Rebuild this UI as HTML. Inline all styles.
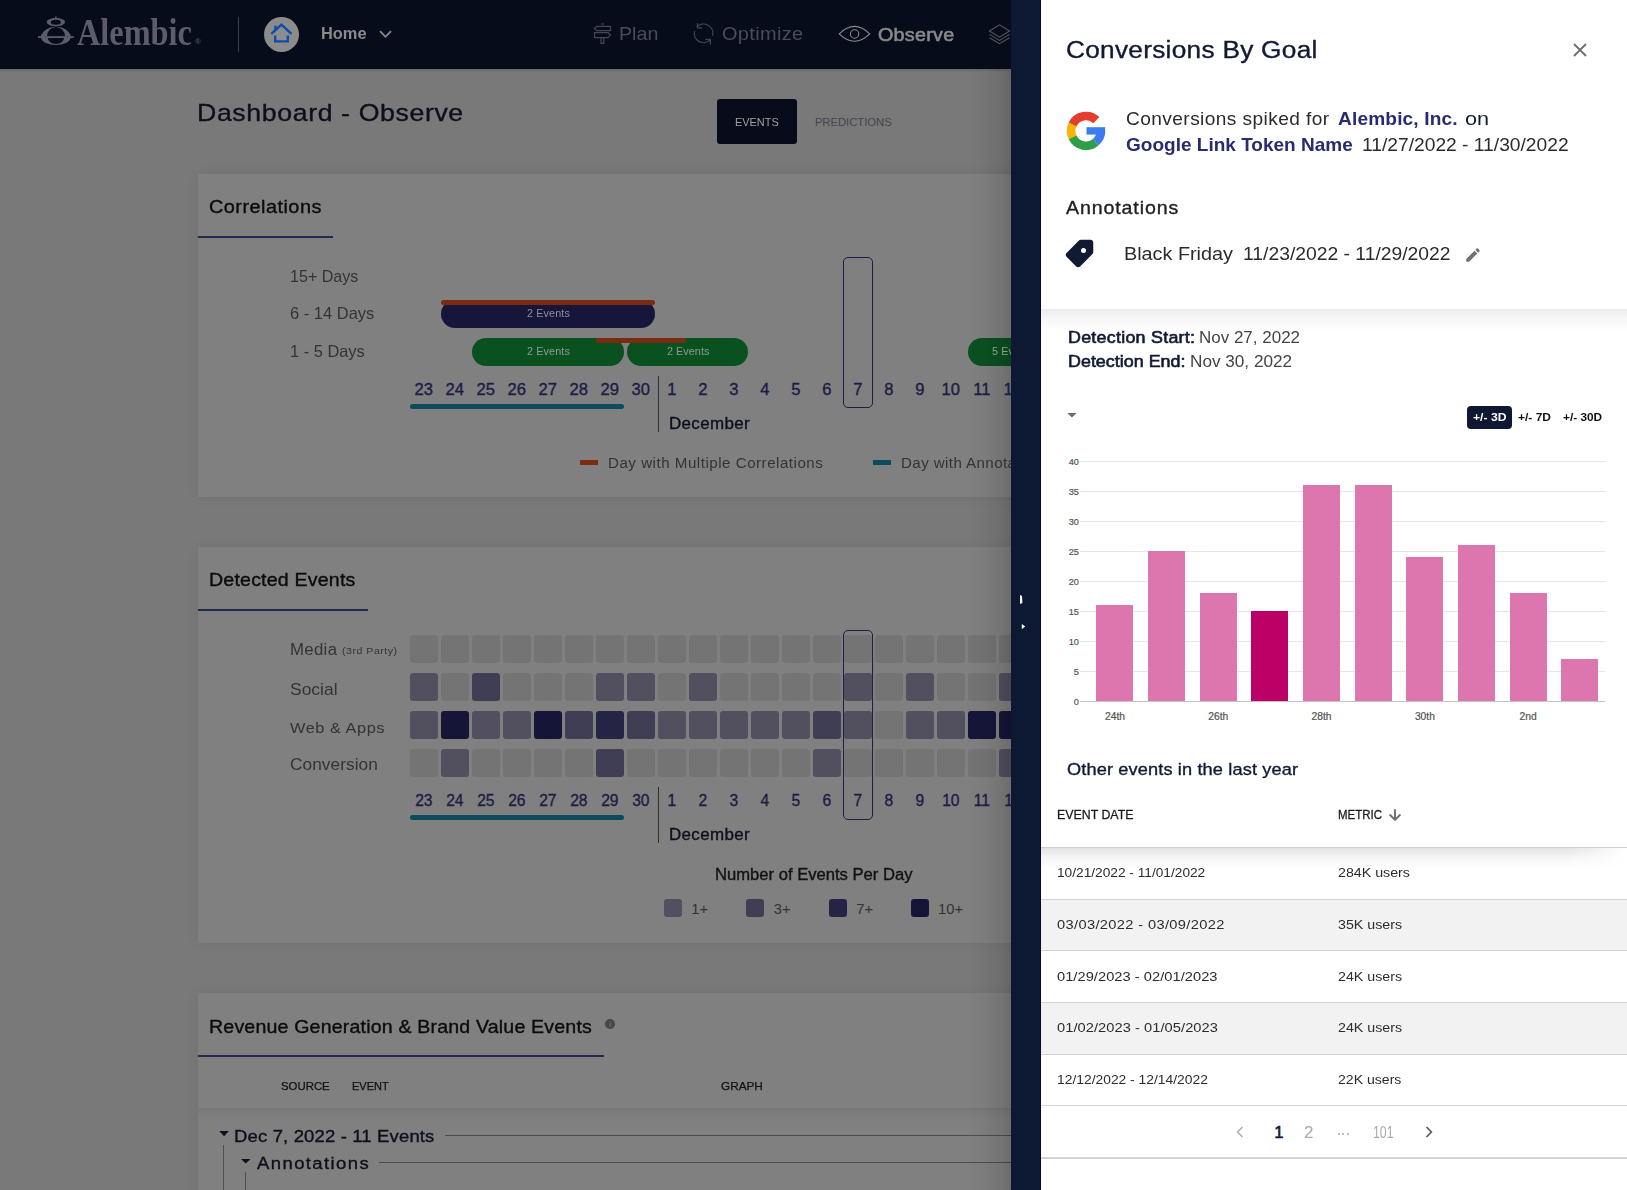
<!DOCTYPE html>
<html><head><meta charset="utf-8"><style>
html,body{margin:0;padding:0}
body{width:1627px;height:1190px;position:relative;overflow:hidden;font-family:"Liberation Sans",sans-serif;background:#7a7a7a}
.t{position:absolute;white-space:nowrap;line-height:1}
</style></head><body><div style="position:absolute;left:0;top:0;width:1011px;height:1190px;overflow:hidden"><div style="position:absolute;left:0.00px;top:0.00px;width:1627.00px;height:1190.00px;background:#797979"></div><div style="position:absolute;left:0.00px;top:0.00px;width:1627.00px;height:69.00px;background:#070c1a"></div><div style="position:absolute;left:0.00px;top:69.00px;width:1627.00px;height:4.00px;background:linear-gradient(to bottom, rgba(0,0,0,0.12), rgba(0,0,0,0))"></div><div style="position:absolute;left:238.00px;top:17.00px;width:1.20px;height:35.00px;background:#3d404c"></div><div style="position:absolute;left:264px;top:17px;width:35px;height:35px;border-radius:50%;background:#8c8c8c"></div><svg style="position:absolute;left:260px;top:15px" width="40" height="40" viewBox="260 15 40 40" fill="none" stroke="#0b4cae" stroke-width="2.4"><path d="M271.3 33.8 L281.4 24.6 L291.5 33.8"/><path d="M275.4 30.2 V25.6"/><path d="M275.2 35.4 V41.4 H287.8 V35.4"/></svg><svg style="position:absolute;left:378px;top:29px" width="15" height="10" viewBox="0 0 15 10"><path d="M2 2.2 L7.5 7.8 L13 2.2" fill="none" stroke="#8a8a8a" stroke-width="1.8"/></svg><svg style="position:absolute;left:0;top:0" width="80" height="50" viewBox="0 0 80 50"><g fill="#5d5c6d" fill-rule="evenodd"><path d="M54.5 18.8 L55.9 15.6 L57.3 18.8 Z"/><path d="M46.60 22.10 A9.25 4.10 0 1 0 65.10 22.10 A9.25 4.10 0 1 0 46.60 22.10 ZM50.75 22.20 A5.10 2.50 0 1 0 60.95 22.20 A5.10 2.50 0 1 0 50.75 22.20 Z"/><path d="M40.6 36.4 C43 31.2 48 26.8 56 26.8 C64 26.8 69 31.2 71.4 36.4 Z M47 36.4 A9 9.3 0 0 1 65 36.4 Z"/><rect x="38" y="36.2" width="35.7" height="1.8"/><path d="M41.2 38 A14.7 7.7 0 0 0 70.5 38 Z M47.8 38 A8.1 6.1 0 0 0 64 38 Z"/></g></svg><span style="position:absolute;left:195px;top:37px;font-size:8px;color:#5d5c6d;font-family:'Liberation Sans',sans-serif">&#174;</span><svg style="position:absolute;left:588px;top:18px" width="30" height="30" viewBox="588 18 30 30" fill="none" stroke="#464851" stroke-width="1.2"><path d="M601.2 24 H604.1"/><path d="M596.9 26.4 H610.5 V30.6 H596.9 L594.3 28.5 Z"/><path d="M594.5 32.7 H608 L610.5 35.1 L608 37.6 H594.5 Z"/><path d="M601 38 V43.4 H603.8 V38"/></svg><svg style="position:absolute;left:688px;top:18px" width="30" height="30" viewBox="688 18 30 30" fill="none" stroke="#42444d" stroke-width="1.3"><path d="M696.69 27.18 A9.30 9.30 0 0 1 712.62 35.65"/><path d="M694.62 30.99 A9.30 9.30 0 0 0 710.06 40.09"/><path d="M697.4 23.3 V27.9 H702"/><path d="M705.2 39.3 H710.4 V44.6"/></svg><svg style="position:absolute;left:834px;top:20px" width="42" height="28" viewBox="834 20 42 28" fill="none" stroke="#8a8a8a" stroke-width="1.1"><path d="M839.2 33.9 Q854.6 19 869.7 33.9 Q854.6 48.6 839.2 33.9 Z"/><circle cx="854.6" cy="34" r="4.2"/></svg><svg style="position:absolute;left:988px;top:24px" width="24" height="22" viewBox="0 0 24 22" fill="none" stroke="#55565e" stroke-width="1.1"><path d="M1.4 7 L11.5 0.8 L21.6 7 L11.5 13.2 Z"/><path d="M1.4 10.4 L11.5 16.4 L21.6 10.4"/><path d="M1.4 13.7 L11.5 19.7 L21.6 13.7"/></svg><div style="position:absolute;left:717px;top:99px;width:80px;height:45px;border-radius:3px;background:#080c1a"></div><div style="position:absolute;left:198.00px;top:174.20px;width:1002.00px;height:322.80px;background:#808080;box-shadow:0 0 12px rgba(0,0,0,0.07)"></div><div style="position:absolute;left:198.00px;top:236.10px;width:135.00px;height:2.00px;background:#1f2b4b"></div><div style="position:absolute;left:198.00px;top:546.70px;width:1002.00px;height:396.00px;background:#808080;box-shadow:0 0 12px rgba(0,0,0,0.07)"></div><div style="position:absolute;left:198.00px;top:609.00px;width:169.80px;height:2.00px;background:#1f2b4b"></div><div style="position:absolute;left:198.00px;top:993.00px;width:1002.00px;height:207.00px;background:#808080;box-shadow:0 0 12px rgba(0,0,0,0.07)"></div><div style="position:absolute;left:198.00px;top:1107.70px;width:1002.00px;height:12.30px;background:linear-gradient(to bottom, rgba(0,0,0,0.07), rgba(0,0,0,0.03) 40%, rgba(0,0,0,0))"></div><div style="position:absolute;left:198.00px;top:1055.00px;width:406.00px;height:2.00px;background:#1f2b4b"></div><div style="position:absolute;left:605px;top:1019px;width:10px;height:10px;border-radius:50%;background:#474747"></div><div style="position:absolute;left:609.30px;top:1021.20px;width:1.40px;height:1.20px;background:#5a5a5a"></div><div style="position:absolute;left:609.30px;top:1023.40px;width:1.40px;height:3.40px;background:#5a5a5a"></div><div style="position:absolute;left:441.0px;top:300.0px;width:214.0px;height:28.0px;border-radius:14px;background:#16163a"></div><div style="position:absolute;left:471.7px;top:338.3px;width:152.5px;height:27.7px;border-radius:14px;background:#0a5120"></div><div style="position:absolute;left:626.6px;top:338.3px;width:121.1px;height:27.7px;border-radius:14px;background:#0a5120"></div><div style="position:absolute;left:968.0px;top:338.3px;width:132.0px;height:27.7px;border-radius:14px;background:#0a5120"></div><div style="position:absolute;left:441px;top:300px;width:214px;height:5px;border-radius:3px;background:#7a2c12"></div><div style="position:absolute;left:596.1px;top:338.3px;width:89.8px;height:4.8px;border-radius:3px;background:#7a2c12"></div><div style="position:absolute;left:410px;top:404.1px;width:214px;height:5px;border-radius:3px;background:#0c4a5c"></div><div style="position:absolute;left:410px;top:815px;width:214px;height:5px;border-radius:3px;background:#0c4a5c"></div><div style="position:absolute;left:658.00px;top:376.00px;width:1.20px;height:56.00px;background:#2e2e2e"></div><div style="position:absolute;left:658.00px;top:787.00px;width:1.20px;height:56.00px;background:#2e2e2e"></div><div style="position:absolute;left:843.3px;top:257.3px;width:29.5px;height:151px;border:1.3px solid #1e1e48;border-radius:5px;box-sizing:border-box"></div><div style="position:absolute;left:843.3px;top:629.9px;width:29.5px;height:189.8px;border:1.3px solid #1e1e48;border-radius:5px;box-sizing:border-box"></div><div style="position:absolute;left:579.60px;top:460.00px;width:18.60px;height:5.00px;background:#7a2c12"></div><div style="position:absolute;left:873.00px;top:460.00px;width:17.80px;height:5.00px;background:#0c4a5c"></div><div style="position:absolute;left:410.1px;top:635.0px;width:27.7px;height:27.8px;border-radius:3px;background:#747474"></div><div style="position:absolute;left:441.1px;top:635.0px;width:27.7px;height:27.8px;border-radius:3px;background:#747474"></div><div style="position:absolute;left:472.1px;top:635.0px;width:27.7px;height:27.8px;border-radius:3px;background:#747474"></div><div style="position:absolute;left:503.1px;top:635.0px;width:27.7px;height:27.8px;border-radius:3px;background:#747474"></div><div style="position:absolute;left:534.1px;top:635.0px;width:27.7px;height:27.8px;border-radius:3px;background:#747474"></div><div style="position:absolute;left:565.1px;top:635.0px;width:27.7px;height:27.8px;border-radius:3px;background:#747474"></div><div style="position:absolute;left:596.1px;top:635.0px;width:27.7px;height:27.8px;border-radius:3px;background:#747474"></div><div style="position:absolute;left:627.1px;top:635.0px;width:27.7px;height:27.8px;border-radius:3px;background:#747474"></div><div style="position:absolute;left:658.1px;top:635.0px;width:27.7px;height:27.8px;border-radius:3px;background:#747474"></div><div style="position:absolute;left:689.1px;top:635.0px;width:27.7px;height:27.8px;border-radius:3px;background:#747474"></div><div style="position:absolute;left:720.1px;top:635.0px;width:27.7px;height:27.8px;border-radius:3px;background:#747474"></div><div style="position:absolute;left:751.1px;top:635.0px;width:27.7px;height:27.8px;border-radius:3px;background:#747474"></div><div style="position:absolute;left:782.1px;top:635.0px;width:27.7px;height:27.8px;border-radius:3px;background:#747474"></div><div style="position:absolute;left:813.1px;top:635.0px;width:27.7px;height:27.8px;border-radius:3px;background:#747474"></div><div style="position:absolute;left:844.1px;top:635.0px;width:27.7px;height:27.8px;border-radius:3px;background:#747474"></div><div style="position:absolute;left:875.1px;top:635.0px;width:27.7px;height:27.8px;border-radius:3px;background:#747474"></div><div style="position:absolute;left:906.1px;top:635.0px;width:27.7px;height:27.8px;border-radius:3px;background:#747474"></div><div style="position:absolute;left:937.1px;top:635.0px;width:27.7px;height:27.8px;border-radius:3px;background:#747474"></div><div style="position:absolute;left:968.1px;top:635.0px;width:27.7px;height:27.8px;border-radius:3px;background:#747474"></div><div style="position:absolute;left:999.1px;top:635.0px;width:27.7px;height:27.8px;border-radius:3px;background:#747474"></div><div style="position:absolute;left:410.1px;top:673.0px;width:27.7px;height:27.8px;border-radius:3px;background:#52505f"></div><div style="position:absolute;left:441.1px;top:673.0px;width:27.7px;height:27.8px;border-radius:3px;background:#747474"></div><div style="position:absolute;left:472.1px;top:673.0px;width:27.7px;height:27.8px;border-radius:3px;background:#403e55"></div><div style="position:absolute;left:503.1px;top:673.0px;width:27.7px;height:27.8px;border-radius:3px;background:#747474"></div><div style="position:absolute;left:534.1px;top:673.0px;width:27.7px;height:27.8px;border-radius:3px;background:#747474"></div><div style="position:absolute;left:565.1px;top:673.0px;width:27.7px;height:27.8px;border-radius:3px;background:#747474"></div><div style="position:absolute;left:596.1px;top:673.0px;width:27.7px;height:27.8px;border-radius:3px;background:#52505f"></div><div style="position:absolute;left:627.1px;top:673.0px;width:27.7px;height:27.8px;border-radius:3px;background:#52505f"></div><div style="position:absolute;left:658.1px;top:673.0px;width:27.7px;height:27.8px;border-radius:3px;background:#747474"></div><div style="position:absolute;left:689.1px;top:673.0px;width:27.7px;height:27.8px;border-radius:3px;background:#52505f"></div><div style="position:absolute;left:720.1px;top:673.0px;width:27.7px;height:27.8px;border-radius:3px;background:#747474"></div><div style="position:absolute;left:751.1px;top:673.0px;width:27.7px;height:27.8px;border-radius:3px;background:#747474"></div><div style="position:absolute;left:782.1px;top:673.0px;width:27.7px;height:27.8px;border-radius:3px;background:#747474"></div><div style="position:absolute;left:813.1px;top:673.0px;width:27.7px;height:27.8px;border-radius:3px;background:#747474"></div><div style="position:absolute;left:844.1px;top:673.0px;width:27.7px;height:27.8px;border-radius:3px;background:#52505f"></div><div style="position:absolute;left:875.1px;top:673.0px;width:27.7px;height:27.8px;border-radius:3px;background:#747474"></div><div style="position:absolute;left:906.1px;top:673.0px;width:27.7px;height:27.8px;border-radius:3px;background:#52505f"></div><div style="position:absolute;left:937.1px;top:673.0px;width:27.7px;height:27.8px;border-radius:3px;background:#747474"></div><div style="position:absolute;left:968.1px;top:673.0px;width:27.7px;height:27.8px;border-radius:3px;background:#747474"></div><div style="position:absolute;left:999.1px;top:673.0px;width:27.7px;height:27.8px;border-radius:3px;background:#52505f"></div><div style="position:absolute;left:410.1px;top:711.1px;width:27.7px;height:27.8px;border-radius:3px;background:#52505f"></div><div style="position:absolute;left:441.1px;top:711.1px;width:27.7px;height:27.8px;border-radius:3px;background:#151538"></div><div style="position:absolute;left:472.1px;top:711.1px;width:27.7px;height:27.8px;border-radius:3px;background:#52505f"></div><div style="position:absolute;left:503.1px;top:711.1px;width:27.7px;height:27.8px;border-radius:3px;background:#52505f"></div><div style="position:absolute;left:534.1px;top:711.1px;width:27.7px;height:27.8px;border-radius:3px;background:#151538"></div><div style="position:absolute;left:565.1px;top:711.1px;width:27.7px;height:27.8px;border-radius:3px;background:#403e55"></div><div style="position:absolute;left:596.1px;top:711.1px;width:27.7px;height:27.8px;border-radius:3px;background:#252444"></div><div style="position:absolute;left:627.1px;top:711.1px;width:27.7px;height:27.8px;border-radius:3px;background:#403e55"></div><div style="position:absolute;left:658.1px;top:711.1px;width:27.7px;height:27.8px;border-radius:3px;background:#52505f"></div><div style="position:absolute;left:689.1px;top:711.1px;width:27.7px;height:27.8px;border-radius:3px;background:#52505f"></div><div style="position:absolute;left:720.1px;top:711.1px;width:27.7px;height:27.8px;border-radius:3px;background:#52505f"></div><div style="position:absolute;left:751.1px;top:711.1px;width:27.7px;height:27.8px;border-radius:3px;background:#52505f"></div><div style="position:absolute;left:782.1px;top:711.1px;width:27.7px;height:27.8px;border-radius:3px;background:#52505f"></div><div style="position:absolute;left:813.1px;top:711.1px;width:27.7px;height:27.8px;border-radius:3px;background:#403e55"></div><div style="position:absolute;left:844.1px;top:711.1px;width:27.7px;height:27.8px;border-radius:3px;background:#52505f"></div><div style="position:absolute;left:875.1px;top:711.1px;width:27.7px;height:27.8px;border-radius:3px;background:#747474"></div><div style="position:absolute;left:906.1px;top:711.1px;width:27.7px;height:27.8px;border-radius:3px;background:#52505f"></div><div style="position:absolute;left:937.1px;top:711.1px;width:27.7px;height:27.8px;border-radius:3px;background:#52505f"></div><div style="position:absolute;left:968.1px;top:711.1px;width:27.7px;height:27.8px;border-radius:3px;background:#151538"></div><div style="position:absolute;left:999.1px;top:711.1px;width:27.7px;height:27.8px;border-radius:3px;background:#151538"></div><div style="position:absolute;left:410.1px;top:749.1px;width:27.7px;height:27.8px;border-radius:3px;background:#747474"></div><div style="position:absolute;left:441.1px;top:749.1px;width:27.7px;height:27.8px;border-radius:3px;background:#52505f"></div><div style="position:absolute;left:472.1px;top:749.1px;width:27.7px;height:27.8px;border-radius:3px;background:#747474"></div><div style="position:absolute;left:503.1px;top:749.1px;width:27.7px;height:27.8px;border-radius:3px;background:#747474"></div><div style="position:absolute;left:534.1px;top:749.1px;width:27.7px;height:27.8px;border-radius:3px;background:#747474"></div><div style="position:absolute;left:565.1px;top:749.1px;width:27.7px;height:27.8px;border-radius:3px;background:#747474"></div><div style="position:absolute;left:596.1px;top:749.1px;width:27.7px;height:27.8px;border-radius:3px;background:#403e55"></div><div style="position:absolute;left:627.1px;top:749.1px;width:27.7px;height:27.8px;border-radius:3px;background:#747474"></div><div style="position:absolute;left:658.1px;top:749.1px;width:27.7px;height:27.8px;border-radius:3px;background:#747474"></div><div style="position:absolute;left:689.1px;top:749.1px;width:27.7px;height:27.8px;border-radius:3px;background:#747474"></div><div style="position:absolute;left:720.1px;top:749.1px;width:27.7px;height:27.8px;border-radius:3px;background:#747474"></div><div style="position:absolute;left:751.1px;top:749.1px;width:27.7px;height:27.8px;border-radius:3px;background:#747474"></div><div style="position:absolute;left:782.1px;top:749.1px;width:27.7px;height:27.8px;border-radius:3px;background:#747474"></div><div style="position:absolute;left:813.1px;top:749.1px;width:27.7px;height:27.8px;border-radius:3px;background:#52505f"></div><div style="position:absolute;left:844.1px;top:749.1px;width:27.7px;height:27.8px;border-radius:3px;background:#747474"></div><div style="position:absolute;left:875.1px;top:749.1px;width:27.7px;height:27.8px;border-radius:3px;background:#747474"></div><div style="position:absolute;left:906.1px;top:749.1px;width:27.7px;height:27.8px;border-radius:3px;background:#747474"></div><div style="position:absolute;left:937.1px;top:749.1px;width:27.7px;height:27.8px;border-radius:3px;background:#747474"></div><div style="position:absolute;left:968.1px;top:749.1px;width:27.7px;height:27.8px;border-radius:3px;background:#747474"></div><div style="position:absolute;left:999.1px;top:749.1px;width:27.7px;height:27.8px;border-radius:3px;background:#52505f"></div><div style="position:absolute;left:663.9px;top:899.1px;width:18px;height:17.7px;border-radius:3px;background:#52505f"></div><div style="position:absolute;left:745.8px;top:899.1px;width:18px;height:17.7px;border-radius:3px;background:#403e55"></div><div style="position:absolute;left:829.2px;top:899.1px;width:18px;height:17.7px;border-radius:3px;background:#252444"></div><div style="position:absolute;left:911.0px;top:899.1px;width:18px;height:17.7px;border-radius:3px;background:#151538"></div><div style="position:absolute;left:445.20px;top:1135.10px;width:654.80px;height:1.00px;background:#4d4d4d"></div><div style="position:absolute;left:379.00px;top:1161.80px;width:721.00px;height:1.00px;background:#4d4d4d"></div><div style="position:absolute;left:223.10px;top:1145.00px;width:1.00px;height:45.00px;background:#505050"></div><div style="position:absolute;left:245.10px;top:1172.30px;width:1.00px;height:17.70px;background:#505050"></div><svg style="position:absolute;left:218px;top:1130px" width="12" height="8"><path d="M1.3 1 H10.9 L6.1 6.2 Z" fill="#0c0f1c"/></svg><svg style="position:absolute;left:240.3px;top:1157.5px" width="12" height="8"><path d="M1 1 H10.5 L5.75 5.6 Z" fill="#0c0f1c"/></svg><div style="position:absolute;left:966px;top:69px;width:45px;height:1121px;background:linear-gradient(to right, rgba(0,0,0,0), rgba(0,0,0,0.03) 40%, rgba(0,0,0,0.09) 75%, rgba(0,0,0,0.16))"></div><span class="t" id="home" style="left:321.06px;top:26.40px;font-size:15.71px;font-weight:700;color:#8a8a8a;letter-spacing:0.000px;font-family:'Liberation Sans', sans-serif;transform:scaleX(1.0444);transform-origin:0 0;">Home</span><span class="t" id="plan" style="left:618.71px;top:25.30px;font-size:18.43px;font-weight:400;color:#4b4c55;letter-spacing:0.000px;font-family:'Liberation Sans', sans-serif;transform:scaleX(1.0677);transform-origin:0 0;">Plan</span><span class="t" id="optimize" style="left:721.70px;top:25.30px;font-size:18.43px;font-weight:400;color:#4b4c55;letter-spacing:0.356px;font-family:'Liberation Sans', sans-serif;transform:scaleX(1.0800);transform-origin:0 0;">Optimize</span><span class="t" id="observe" style="left:877.61px;top:25.52px;font-size:18.29px;font-weight:400;color:#8a8a8a;letter-spacing:0.240px;font-family:'Liberation Sans', sans-serif;transform:scaleX(1.0800);transform-origin:0 0;-webkit-text-stroke:0.60px #8a8a8a;">Observe</span><span class="t" id="logo" style="left:76.54px;top:13.71px;font-size:37.12px;font-weight:700;color:#5d5c6d;letter-spacing:0.000px;font-family:'Liberation Serif', serif;transform:scaleX(0.8710);transform-origin:0 0;">Alembic</span><span class="t" id="title" style="left:196.80px;top:101.08px;font-size:24.71px;font-weight:400;color:#0c0f1c;letter-spacing:0.573px;font-family:'Liberation Sans', sans-serif;transform:scaleX(1.0800);transform-origin:0 0;-webkit-text-stroke:0.35px #0c0f1c;">Dashboard - Observe</span><span class="t" id="evbtn" style="left:735.01px;top:117.02px;font-size:11.31px;font-weight:400;color:#a0a0a0;letter-spacing:0.000px;font-family:'Liberation Sans', sans-serif;transform:scaleX(0.9664);transform-origin:0 0;">EVENTS</span><span class="t" id="predbtn" style="left:814.89px;top:117.02px;font-size:11.31px;font-weight:400;color:#45454f;letter-spacing:-0.038px;font-family:'Liberation Sans', sans-serif;">PREDICTIONS</span><span class="t" id="corr" style="left:209.00px;top:198.10px;font-size:18.43px;font-weight:400;color:#0b0b0b;letter-spacing:0.431px;font-family:'Liberation Sans', sans-serif;transform:scaleX(1.0800);transform-origin:0 0;-webkit-text-stroke:0.35px #0b0b0b;">Correlations</span><span class="t" id="d15" style="left:289.78px;top:267.89px;font-size:16.43px;font-weight:400;color:#333;letter-spacing:0.000px;font-family:'Liberation Sans', sans-serif;transform:scaleX(0.9786);transform-origin:0 0;">15+ Days</span><span class="t" id="d614" style="left:289.76px;top:306.18px;font-size:15.86px;font-weight:400;color:#333;letter-spacing:0.000px;font-family:'Liberation Sans', sans-serif;transform:scaleX(1.0393);transform-origin:0 0;">6 - 14 Days</span><span class="t" id="d15d" style="left:289.76px;top:344.08px;font-size:15.86px;font-weight:400;color:#333;letter-spacing:0.000px;font-family:'Liberation Sans', sans-serif;transform:scaleX(1.0345);transform-origin:0 0;">1 - 5 Days</span><span class="t" id="ev1" style="left:526.51px;top:309.24px;font-size:10.00px;font-weight:400;color:#8e8e92;letter-spacing:0.111px;font-family:'Liberation Sans', sans-serif;transform:scaleX(1.0800);transform-origin:0 0;">2 Events</span><span class="t" id="ev2" style="left:526.51px;top:347.14px;font-size:10.00px;font-weight:400;color:#8e9a92;letter-spacing:0.111px;font-family:'Liberation Sans', sans-serif;transform:scaleX(1.0800);transform-origin:0 0;">2 Events</span><span class="t" id="ev3" style="left:666.51px;top:347.14px;font-size:10.00px;font-weight:400;color:#8e9a92;letter-spacing:0.044px;font-family:'Liberation Sans', sans-serif;transform:scaleX(1.0800);transform-origin:0 0;">2 Events</span><span class="t" id="ev4" style="left:991.51px;top:347.14px;font-size:10.00px;font-weight:400;color:#8e9a92;letter-spacing:0.111px;font-family:'Liberation Sans', sans-serif;transform:scaleX(1.0800);transform-origin:0 0;">5 Events</span><span class="t" id="dec1" style="left:668.84px;top:415.50px;font-size:15.71px;font-weight:400;color:#0c0f1c;letter-spacing:0.317px;font-family:'Liberation Sans', sans-serif;transform:scaleX(1.0800);transform-origin:0 0;-webkit-text-stroke:0.35px #0c0f1c;">December</span><span class="t" id="leg1" style="left:608.02px;top:455.75px;font-size:14.00px;font-weight:400;color:#333;letter-spacing:0.474px;font-family:'Liberation Sans', sans-serif;transform:scaleX(1.0800);transform-origin:0 0;">Day with Multiple Correlations</span><span class="t" id="leg2" style="left:900.82px;top:455.75px;font-size:14.00px;font-weight:400;color:#333;letter-spacing:0.377px;font-family:'Liberation Sans', sans-serif;transform:scaleX(1.0800);transform-origin:0 0;">Day with Annotations</span><span class="t" id="det" style="left:209.32px;top:571.34px;font-size:18.14px;font-weight:400;color:#0b0b0b;letter-spacing:0.180px;font-family:'Liberation Sans', sans-serif;transform:scaleX(1.0800);transform-origin:0 0;-webkit-text-stroke:0.35px #0b0b0b;">Detected Events</span><span class="t" id="lmedia" style="left:290.04px;top:641.52px;font-size:15.57px;font-weight:400;color:#333;letter-spacing:0.285px;font-family:'Liberation Sans', sans-serif;transform:scaleX(1.0800);transform-origin:0 0;">Media</span><span class="t" id="l3rd" style="left:342.42px;top:646.36px;font-size:9.86px;font-weight:400;color:#333;letter-spacing:0.457px;font-family:'Liberation Sans', sans-serif;transform:scaleX(1.0800);transform-origin:0 0;">(3rd Party)</span><span class="t" id="lsocial" style="left:289.52px;top:681.14px;font-size:16.14px;font-weight:400;color:#333;letter-spacing:0.025px;font-family:'Liberation Sans', sans-serif;transform:scaleX(1.0800);transform-origin:0 0;">Social</span><span class="t" id="lweb" style="left:289.56px;top:720.08px;font-size:15.14px;font-weight:400;color:#333;letter-spacing:0.501px;font-family:'Liberation Sans', sans-serif;transform:scaleX(1.0800);transform-origin:0 0;">Web &amp; Apps</span><span class="t" id="lconv" style="left:289.52px;top:757.46px;font-size:16.00px;font-weight:400;color:#333;letter-spacing:0.046px;font-family:'Liberation Sans', sans-serif;transform:scaleX(1.0800);transform-origin:0 0;">Conversion</span><span class="t" id="dec2" style="left:668.84px;top:826.50px;font-size:15.71px;font-weight:400;color:#0c0f1c;letter-spacing:0.317px;font-family:'Liberation Sans', sans-serif;transform:scaleX(1.0800);transform-origin:0 0;-webkit-text-stroke:0.35px #0c0f1c;">December</span><span class="t" id="nepd" style="left:714.95px;top:866.62px;font-size:15.57px;font-weight:400;color:#111;letter-spacing:0.000px;font-family:'Liberation Sans', sans-serif;transform:scaleX(1.0670);transform-origin:0 0;-webkit-text-stroke:0.34px #111;">Number of Events Per Day</span><span class="t" id="lg0" style="left:691.34px;top:902.14px;font-size:14.71px;font-weight:400;color:#333;letter-spacing:0.000px;font-family:'Liberation Sans', sans-serif;">1+</span><span class="t" id="lg1" style="left:773.84px;top:902.14px;font-size:14.71px;font-weight:400;color:#333;letter-spacing:0.000px;font-family:'Liberation Sans', sans-serif;">3+</span><span class="t" id="lg2" style="left:856.24px;top:902.14px;font-size:14.71px;font-weight:400;color:#333;letter-spacing:0.000px;font-family:'Liberation Sans', sans-serif;">7+</span><span class="t" id="lg3" style="left:938.04px;top:902.14px;font-size:14.71px;font-weight:400;color:#333;letter-spacing:0.000px;font-family:'Liberation Sans', sans-serif;">10+</span><span class="t" id="rev" style="left:209.02px;top:1017.64px;font-size:18.14px;font-weight:400;color:#0b0b0b;letter-spacing:0.163px;font-family:'Liberation Sans', sans-serif;transform:scaleX(1.0800);transform-origin:0 0;-webkit-text-stroke:0.35px #0b0b0b;">Revenue Generation &amp; Brand Value Events</span><span class="t" id="hsrc" style="left:280.99px;top:1081.12px;font-size:11.31px;font-weight:400;color:#111;letter-spacing:-0.000px;font-family:'Liberation Sans', sans-serif;transform:scaleX(1.0079);transform-origin:0 0;-webkit-text-stroke:0.25px #111;">SOURCE</span><span class="t" id="hev" style="left:351.60px;top:1081.12px;font-size:11.31px;font-weight:400;color:#111;letter-spacing:0.000px;font-family:'Liberation Sans', sans-serif;transform:scaleX(0.9740);transform-origin:0 0;-webkit-text-stroke:0.25px #111;">EVENT</span><span class="t" id="hgr" style="left:720.67px;top:1081.12px;font-size:11.31px;font-weight:400;color:#111;letter-spacing:0.000px;font-family:'Liberation Sans', sans-serif;transform:scaleX(1.0416);transform-origin:0 0;-webkit-text-stroke:0.25px #111;">GRAPH</span><span class="t" id="dec7" style="left:234.47px;top:1127.89px;font-size:17.14px;font-weight:400;color:#0c0f1c;letter-spacing:0.139px;font-family:'Liberation Sans', sans-serif;transform:scaleX(1.0800);transform-origin:0 0;-webkit-text-stroke:0.35px #0c0f1c;">Dec 7, 2022 - 11 Events</span><span class="t" id="annt" style="left:257.37px;top:1155.09px;font-size:17.14px;font-weight:400;color:#0c0f1c;letter-spacing:1.303px;font-family:'Liberation Sans', sans-serif;transform:scaleX(1.0800);transform-origin:0 0;-webkit-text-stroke:0.35px #0c0f1c;">Annotations</span><span class="t" id="dn0_0" style="left:414.58px;top:381.67px;font-size:16.57px;font-weight:400;color:#1c1c44;letter-spacing:0.000px;font-family:'Liberation Sans', sans-serif;-webkit-text-stroke:0.35px #1c1c44;">23</span><span class="t" id="dn0_1" style="left:445.58px;top:381.67px;font-size:16.57px;font-weight:400;color:#1c1c44;letter-spacing:0.000px;font-family:'Liberation Sans', sans-serif;-webkit-text-stroke:0.35px #1c1c44;">24</span><span class="t" id="dn0_2" style="left:476.58px;top:381.67px;font-size:16.57px;font-weight:400;color:#1c1c44;letter-spacing:0.000px;font-family:'Liberation Sans', sans-serif;-webkit-text-stroke:0.35px #1c1c44;">25</span><span class="t" id="dn0_3" style="left:507.58px;top:381.67px;font-size:16.57px;font-weight:400;color:#1c1c44;letter-spacing:0.000px;font-family:'Liberation Sans', sans-serif;-webkit-text-stroke:0.35px #1c1c44;">26</span><span class="t" id="dn0_4" style="left:538.58px;top:381.67px;font-size:16.57px;font-weight:400;color:#1c1c44;letter-spacing:0.000px;font-family:'Liberation Sans', sans-serif;-webkit-text-stroke:0.35px #1c1c44;">27</span><span class="t" id="dn0_5" style="left:569.58px;top:381.67px;font-size:16.57px;font-weight:400;color:#1c1c44;letter-spacing:0.000px;font-family:'Liberation Sans', sans-serif;-webkit-text-stroke:0.35px #1c1c44;">28</span><span class="t" id="dn0_6" style="left:600.58px;top:381.67px;font-size:16.57px;font-weight:400;color:#1c1c44;letter-spacing:0.000px;font-family:'Liberation Sans', sans-serif;-webkit-text-stroke:0.35px #1c1c44;">29</span><span class="t" id="dn0_7" style="left:631.58px;top:381.67px;font-size:16.57px;font-weight:400;color:#1c1c44;letter-spacing:0.000px;font-family:'Liberation Sans', sans-serif;-webkit-text-stroke:0.35px #1c1c44;">30</span><span class="t" id="dn0_8" style="left:667.19px;top:381.67px;font-size:16.57px;font-weight:400;color:#1c1c44;letter-spacing:0.000px;font-family:'Liberation Sans', sans-serif;-webkit-text-stroke:0.35px #1c1c44;">1</span><span class="t" id="dn0_9" style="left:698.19px;top:381.67px;font-size:16.57px;font-weight:400;color:#1c1c44;letter-spacing:0.000px;font-family:'Liberation Sans', sans-serif;-webkit-text-stroke:0.35px #1c1c44;">2</span><span class="t" id="dn0_10" style="left:729.19px;top:381.67px;font-size:16.57px;font-weight:400;color:#1c1c44;letter-spacing:0.000px;font-family:'Liberation Sans', sans-serif;-webkit-text-stroke:0.35px #1c1c44;">3</span><span class="t" id="dn0_11" style="left:760.19px;top:381.67px;font-size:16.57px;font-weight:400;color:#1c1c44;letter-spacing:0.000px;font-family:'Liberation Sans', sans-serif;-webkit-text-stroke:0.35px #1c1c44;">4</span><span class="t" id="dn0_12" style="left:791.19px;top:381.67px;font-size:16.57px;font-weight:400;color:#1c1c44;letter-spacing:0.000px;font-family:'Liberation Sans', sans-serif;-webkit-text-stroke:0.35px #1c1c44;">5</span><span class="t" id="dn0_13" style="left:822.19px;top:381.67px;font-size:16.57px;font-weight:400;color:#1c1c44;letter-spacing:0.000px;font-family:'Liberation Sans', sans-serif;-webkit-text-stroke:0.35px #1c1c44;">6</span><span class="t" id="dn0_14" style="left:853.19px;top:381.67px;font-size:16.57px;font-weight:400;color:#1c1c44;letter-spacing:0.000px;font-family:'Liberation Sans', sans-serif;-webkit-text-stroke:0.35px #1c1c44;">7</span><span class="t" id="dn0_15" style="left:884.19px;top:381.67px;font-size:16.57px;font-weight:400;color:#1c1c44;letter-spacing:0.000px;font-family:'Liberation Sans', sans-serif;-webkit-text-stroke:0.35px #1c1c44;">8</span><span class="t" id="dn0_16" style="left:915.19px;top:381.67px;font-size:16.57px;font-weight:400;color:#1c1c44;letter-spacing:0.000px;font-family:'Liberation Sans', sans-serif;-webkit-text-stroke:0.35px #1c1c44;">9</span><span class="t" id="dn0_17" style="left:941.58px;top:381.67px;font-size:16.57px;font-weight:400;color:#1c1c44;letter-spacing:0.000px;font-family:'Liberation Sans', sans-serif;-webkit-text-stroke:0.35px #1c1c44;">10</span><span class="t" id="dn0_18" style="left:973.20px;top:381.67px;font-size:16.57px;font-weight:400;color:#1c1c44;letter-spacing:0.000px;font-family:'Liberation Sans', sans-serif;-webkit-text-stroke:0.35px #1c1c44;">11</span><span class="t" id="dn0_19" style="left:1003.58px;top:381.67px;font-size:16.57px;font-weight:400;color:#1c1c44;letter-spacing:0.000px;font-family:'Liberation Sans', sans-serif;-webkit-text-stroke:0.35px #1c1c44;">12</span><span class="t" id="dn1_0" style="left:415.14px;top:793.42px;font-size:15.57px;font-weight:400;color:#1c1c44;letter-spacing:0.000px;font-family:'Liberation Sans', sans-serif;-webkit-text-stroke:0.34px #1c1c44;">23</span><span class="t" id="dn1_1" style="left:446.14px;top:793.42px;font-size:15.57px;font-weight:400;color:#1c1c44;letter-spacing:0.000px;font-family:'Liberation Sans', sans-serif;-webkit-text-stroke:0.34px #1c1c44;">24</span><span class="t" id="dn1_2" style="left:477.14px;top:793.42px;font-size:15.57px;font-weight:400;color:#1c1c44;letter-spacing:0.000px;font-family:'Liberation Sans', sans-serif;-webkit-text-stroke:0.34px #1c1c44;">25</span><span class="t" id="dn1_3" style="left:508.14px;top:793.42px;font-size:15.57px;font-weight:400;color:#1c1c44;letter-spacing:0.000px;font-family:'Liberation Sans', sans-serif;-webkit-text-stroke:0.34px #1c1c44;">26</span><span class="t" id="dn1_4" style="left:539.14px;top:793.42px;font-size:15.57px;font-weight:400;color:#1c1c44;letter-spacing:0.000px;font-family:'Liberation Sans', sans-serif;-webkit-text-stroke:0.34px #1c1c44;">27</span><span class="t" id="dn1_5" style="left:570.14px;top:793.42px;font-size:15.57px;font-weight:400;color:#1c1c44;letter-spacing:0.000px;font-family:'Liberation Sans', sans-serif;-webkit-text-stroke:0.34px #1c1c44;">28</span><span class="t" id="dn1_6" style="left:601.14px;top:793.42px;font-size:15.57px;font-weight:400;color:#1c1c44;letter-spacing:0.000px;font-family:'Liberation Sans', sans-serif;-webkit-text-stroke:0.34px #1c1c44;">29</span><span class="t" id="dn1_7" style="left:632.14px;top:793.42px;font-size:15.57px;font-weight:400;color:#1c1c44;letter-spacing:0.000px;font-family:'Liberation Sans', sans-serif;-webkit-text-stroke:0.34px #1c1c44;">30</span><span class="t" id="dn1_8" style="left:667.47px;top:793.42px;font-size:15.57px;font-weight:400;color:#1c1c44;letter-spacing:0.000px;font-family:'Liberation Sans', sans-serif;-webkit-text-stroke:0.34px #1c1c44;">1</span><span class="t" id="dn1_9" style="left:698.47px;top:793.42px;font-size:15.57px;font-weight:400;color:#1c1c44;letter-spacing:0.000px;font-family:'Liberation Sans', sans-serif;-webkit-text-stroke:0.34px #1c1c44;">2</span><span class="t" id="dn1_10" style="left:729.47px;top:793.42px;font-size:15.57px;font-weight:400;color:#1c1c44;letter-spacing:0.000px;font-family:'Liberation Sans', sans-serif;-webkit-text-stroke:0.34px #1c1c44;">3</span><span class="t" id="dn1_11" style="left:760.47px;top:793.42px;font-size:15.57px;font-weight:400;color:#1c1c44;letter-spacing:0.000px;font-family:'Liberation Sans', sans-serif;-webkit-text-stroke:0.34px #1c1c44;">4</span><span class="t" id="dn1_12" style="left:791.47px;top:793.42px;font-size:15.57px;font-weight:400;color:#1c1c44;letter-spacing:0.000px;font-family:'Liberation Sans', sans-serif;-webkit-text-stroke:0.34px #1c1c44;">5</span><span class="t" id="dn1_13" style="left:822.47px;top:793.42px;font-size:15.57px;font-weight:400;color:#1c1c44;letter-spacing:0.000px;font-family:'Liberation Sans', sans-serif;-webkit-text-stroke:0.34px #1c1c44;">6</span><span class="t" id="dn1_14" style="left:853.47px;top:793.42px;font-size:15.57px;font-weight:400;color:#1c1c44;letter-spacing:0.000px;font-family:'Liberation Sans', sans-serif;-webkit-text-stroke:0.34px #1c1c44;">7</span><span class="t" id="dn1_15" style="left:884.47px;top:793.42px;font-size:15.57px;font-weight:400;color:#1c1c44;letter-spacing:0.000px;font-family:'Liberation Sans', sans-serif;-webkit-text-stroke:0.34px #1c1c44;">8</span><span class="t" id="dn1_16" style="left:915.47px;top:793.42px;font-size:15.57px;font-weight:400;color:#1c1c44;letter-spacing:0.000px;font-family:'Liberation Sans', sans-serif;-webkit-text-stroke:0.34px #1c1c44;">9</span><span class="t" id="dn1_17" style="left:942.14px;top:793.42px;font-size:15.57px;font-weight:400;color:#1c1c44;letter-spacing:0.000px;font-family:'Liberation Sans', sans-serif;-webkit-text-stroke:0.34px #1c1c44;">10</span><span class="t" id="dn1_18" style="left:973.72px;top:793.42px;font-size:15.57px;font-weight:400;color:#1c1c44;letter-spacing:0.000px;font-family:'Liberation Sans', sans-serif;-webkit-text-stroke:0.34px #1c1c44;">11</span><span class="t" id="dn1_19" style="left:1004.14px;top:793.42px;font-size:15.57px;font-weight:400;color:#1c1c44;letter-spacing:0.000px;font-family:'Liberation Sans', sans-serif;-webkit-text-stroke:0.34px #1c1c44;">12</span></div><div style="position:absolute;left:1011.00px;top:0.00px;width:30.00px;height:1190.00px;background:#0d1832"></div><div style="position:absolute;left:1040.00px;top:0.00px;width:1.00px;height:1190.00px;background:#070d20"></div><div style="position:absolute;left:1041.00px;top:0.00px;width:586.00px;height:1190.00px;background:#ffffff"></div><svg style="position:absolute;left:1017px;top:592px" width="10" height="40"><path d="M3 3 L5 4 L5.4 11 L3 12 Z" fill="#fff"/><path d="M4.8 31.9 L8.2 34.6 L4.8 37.3 Z" fill="#fff"/></svg><div style="position:absolute;left:1041px;top:309.4px;width:586px;height:22px;background:linear-gradient(to bottom, rgba(0,0,0,0.075), rgba(0,0,0,0.03) 45%, rgba(0,0,0,0))"></div><svg style="position:absolute;left:1572px;top:42px" width="16" height="16" viewBox="0 0 16 16"><path d="M2 2 L14 14 M14 2 L2 14" stroke="#707070" stroke-width="1.9"/></svg><svg style="position:absolute;left:1062px;top:106px" width="48" height="49" viewBox="1062 106 48 49"><path d="M1096.35 120.18 A14.90 14.90 0 0 0 1072.50 124.60" fill="none" stroke="#e63c2e" stroke-width="8.60"/><path d="M1072.61 124.37 A14.90 14.90 0 0 0 1072.72 137.66" fill="none" stroke="#f9b40a" stroke-width="8.60"/><path d="M1072.61 137.43 A14.90 14.90 0 0 0 1095.58 142.31" fill="none" stroke="#2f9e48" stroke-width="8.60"/><path d="M1095.58 142.31 A14.90 14.90 0 0 0 1100.90 130.64" fill="none" stroke="#3b7ded" stroke-width="8.60"/><rect x="1086.5" y="127.2" width="18.6" height="7.4" fill="#3b7ded"/></svg><svg style="position:absolute;left:1063px;top:237px" width="33" height="33" viewBox="0 0 24 24"><g transform="rotate(90 12 12)"><path fill="#101a33" d="M21.41 11.58l-9-9C12.05 2.22 11.55 2 11 2H4c-1.1 0-2 .9-2 2v7c0 .55.22 1.05.59 1.42l9 9c.36.36.86.58 1.41.58.55 0 1.05-.22 1.41-.59l7-7c.37-.36.59-.86.59-1.41 0-.55-.23-1.06-.59-1.42z"/></g></svg><div style="position:absolute;left:1080.9px;top:247.7px;width:5.2px;height:5.2px;border-radius:50%;background:#fff"></div><svg style="position:absolute;left:1464px;top:245.5px" width="18" height="18" viewBox="0 0 24 24"><path fill="#707070" d="M3 17.25V21h3.75L17.81 9.94l-3.75-3.75L3 17.25zM20.71 7.04c.39-.39.39-1.02 0-1.41l-2.34-2.34c-.39-.39-1.02-.39-1.41 0l-1.83 1.83 3.75 3.75 1.83-1.83z"/></svg><svg style="position:absolute;left:1066px;top:412px" width="12" height="7"><path d="M1.4 1 H10.5 L5.95 5.6 Z" fill="#6a6a6a"/></svg><div style="position:absolute;left:1467px;top:406px;width:45px;height:23px;border-radius:4px;background:#0f1833"></div><div style="position:absolute;left:1079.50px;top:670.60px;width:525.50px;height:1.20px;background:#e6e6e6"></div><div style="position:absolute;left:1079.50px;top:640.60px;width:525.50px;height:1.20px;background:#e6e6e6"></div><div style="position:absolute;left:1079.50px;top:610.60px;width:525.50px;height:1.20px;background:#e6e6e6"></div><div style="position:absolute;left:1079.50px;top:580.60px;width:525.50px;height:1.20px;background:#e6e6e6"></div><div style="position:absolute;left:1079.50px;top:550.60px;width:525.50px;height:1.20px;background:#e6e6e6"></div><div style="position:absolute;left:1079.50px;top:520.60px;width:525.50px;height:1.20px;background:#e6e6e6"></div><div style="position:absolute;left:1079.50px;top:490.60px;width:525.50px;height:1.20px;background:#e6e6e6"></div><div style="position:absolute;left:1079.50px;top:460.60px;width:525.50px;height:1.20px;background:#e6e6e6"></div><div style="position:absolute;left:1079.50px;top:700.50px;width:525.50px;height:1.50px;background:#c4c4c4"></div><div style="position:absolute;left:1096.40px;top:605.20px;width:37.10px;height:95.80px;background:#dd76ae"></div><div style="position:absolute;left:1148.05px;top:551.20px;width:37.10px;height:149.80px;background:#dd76ae"></div><div style="position:absolute;left:1199.70px;top:593.20px;width:37.10px;height:107.80px;background:#dd76ae"></div><div style="position:absolute;left:1251.35px;top:611.20px;width:37.10px;height:89.80px;background:#bb0066"></div><div style="position:absolute;left:1303.00px;top:485.20px;width:37.10px;height:215.80px;background:#dd76ae"></div><div style="position:absolute;left:1354.65px;top:485.20px;width:37.10px;height:215.80px;background:#dd76ae"></div><div style="position:absolute;left:1406.30px;top:557.20px;width:37.10px;height:143.80px;background:#dd76ae"></div><div style="position:absolute;left:1457.95px;top:545.20px;width:37.10px;height:155.80px;background:#dd76ae"></div><div style="position:absolute;left:1509.60px;top:593.20px;width:37.10px;height:107.80px;background:#dd76ae"></div><div style="position:absolute;left:1561.25px;top:659.20px;width:37.10px;height:41.80px;background:#dd76ae"></div><div style="position:absolute;left:1041.00px;top:846.90px;width:586.00px;height:1.20px;background:#d0d0d0"></div><div style="position:absolute;left:1041px;top:848.1px;width:586px;height:21px;background:linear-gradient(to bottom, rgba(0,0,0,0.11), rgba(0,0,0,0.04) 45%, rgba(0,0,0,0));-webkit-mask-image:linear-gradient(to right, #000 90%, rgba(0,0,0,0))"></div><div style="position:absolute;left:1041.00px;top:899.20px;width:586.00px;height:51.20px;background:#f2f2f2"></div><div style="position:absolute;left:1041.00px;top:1002.40px;width:586.00px;height:52.00px;background:#f2f2f2"></div><div style="position:absolute;left:1041.00px;top:898.60px;width:586.00px;height:1.20px;background:#d3d3d3"></div><div style="position:absolute;left:1041.00px;top:949.80px;width:586.00px;height:1.20px;background:#d3d3d3"></div><div style="position:absolute;left:1041.00px;top:1001.80px;width:586.00px;height:1.20px;background:#d3d3d3"></div><div style="position:absolute;left:1041.00px;top:1053.80px;width:586.00px;height:1.20px;background:#d3d3d3"></div><div style="position:absolute;left:1041.00px;top:1104.80px;width:586.00px;height:1.20px;background:#d3d3d3"></div><div style="position:absolute;left:1041.00px;top:1157.40px;width:586.00px;height:1.20px;background:#d3d3d3"></div><svg style="position:absolute;left:1380px;top:800px" width="30" height="30" viewBox="1380 800 30 30" fill="none" stroke="#6e6e6e" stroke-width="1.9"><path d="M1395 809.2 V819.6"/><path d="M1389.6 814.5 L1395 819.9 L1400.4 814.5"/></svg><svg style="position:absolute;left:1234px;top:1125px" width="12" height="14"><path d="M8.5 2 L3.6 7 L8.5 12" fill="none" stroke="#b0b0b0" stroke-width="1.6"/></svg><svg style="position:absolute;left:1423px;top:1125px" width="12" height="14"><path d="M3.5 2 L8.4 7 L3.5 12" fill="none" stroke="#555" stroke-width="1.6"/></svg><div style="position:absolute;left:1338.30px;top:1133.20px;width:2.00px;height:2.00px;background:#aaa;border-radius:1px"></div><div style="position:absolute;left:1342.40px;top:1133.20px;width:2.00px;height:2.00px;background:#aaa;border-radius:1px"></div><div style="position:absolute;left:1346.50px;top:1133.20px;width:2.00px;height:2.00px;background:#aaa;border-radius:1px"></div><span class="t" id="dtitle" style="left:1065.52px;top:38.44px;font-size:24.29px;font-weight:400;color:#101a33;letter-spacing:0.259px;font-family:'Liberation Sans', sans-serif;transform:scaleX(1.0800);transform-origin:0 0;-webkit-text-stroke:0.35px #101a33;">Conversions By Goal</span><span class="t" id="spk" style="left:1125.64px;top:110.70px;font-size:17.71px;font-weight:400;color:#2b2b2b;letter-spacing:0.393px;font-family:'Liberation Sans', sans-serif;transform:scaleX(1.0800);transform-origin:0 0;">Conversions spiked for</span><span class="t" id="alem" style="left:1338.24px;top:110.70px;font-size:17.71px;font-weight:700;color:#272b6f;letter-spacing:0.138px;font-family:'Liberation Sans', sans-serif;transform:scaleX(1.0800);transform-origin:0 0;">Alembic, Inc.</span><span class="t" id="on" style="left:1465.43px;top:110.70px;font-size:17.71px;font-weight:400;color:#101a33;letter-spacing:0.000px;font-family:'Liberation Sans', sans-serif;transform:scaleX(1.2215);transform-origin:0 0;">on</span><span class="t" id="gltn" style="left:1125.64px;top:137.28px;font-size:17.86px;font-weight:700;color:#272b6f;letter-spacing:0.000px;font-family:'Liberation Sans', sans-serif;transform:scaleX(1.0647);transform-origin:0 0;">Google Link Token Name</span><span class="t" id="gdate" style="left:1361.54px;top:137.28px;font-size:17.86px;font-weight:400;color:#2b2b2b;letter-spacing:0.000px;font-family:'Liberation Sans', sans-serif;transform:scaleX(1.0762);transform-origin:0 0;">11/27/2022 - 11/30/2022</span><span class="t" id="ann" style="left:1066.12px;top:198.54px;font-size:18.14px;font-weight:400;color:#1f1f1f;letter-spacing:0.821px;font-family:'Liberation Sans', sans-serif;transform:scaleX(1.0800);transform-origin:0 0;-webkit-text-stroke:0.35px #1f1f1f;">Annotations</span><span class="t" id="bf" style="left:1124.01px;top:245.26px;font-size:18.71px;font-weight:400;color:#2b2b2b;letter-spacing:0.000px;font-family:'Liberation Sans', sans-serif;transform:scaleX(1.0591);transform-origin:0 0;">Black Friday</span><span class="t" id="bfdate" style="left:1243.23px;top:245.26px;font-size:18.71px;font-weight:400;color:#2b2b2b;letter-spacing:0.000px;font-family:'Liberation Sans', sans-serif;transform:scaleX(1.0331);transform-origin:0 0;">11/23/2022 - 11/29/2022</span><span class="t" id="dsl" style="left:1067.79px;top:329.87px;font-size:16.57px;font-weight:400;color:#101a33;letter-spacing:0.230px;font-family:'Liberation Sans', sans-serif;transform:scaleX(1.0800);transform-origin:0 0;-webkit-text-stroke:0.60px #101a33;">Detection Start:</span><span class="t" id="dsv" style="left:1198.74px;top:329.87px;font-size:16.57px;font-weight:400;color:#444;letter-spacing:0.000px;font-family:'Liberation Sans', sans-serif;transform:scaleX(1.0254);transform-origin:0 0;">Nov 27, 2022</span><span class="t" id="del" style="left:1067.79px;top:353.87px;font-size:16.57px;font-weight:400;color:#101a33;letter-spacing:0.012px;font-family:'Liberation Sans', sans-serif;transform:scaleX(1.0800);transform-origin:0 0;-webkit-text-stroke:0.60px #101a33;">Detection End:</span><span class="t" id="dev" style="left:1189.53px;top:353.87px;font-size:16.57px;font-weight:400;color:#444;letter-spacing:-0.000px;font-family:'Liberation Sans', sans-serif;transform:scaleX(1.0357);transform-origin:0 0;">Nov 30, 2022</span><span class="t" id="b3d" style="left:1472.95px;top:413.13px;font-size:10.00px;font-weight:700;color:#ffffff;letter-spacing:0.000px;font-family:'Liberation Sans', sans-serif;transform:scaleX(1.2173);transform-origin:0 0;">+/- 3D</span><span class="t" id="b7d" style="left:1517.86px;top:413.13px;font-size:10.00px;font-weight:700;color:#111;letter-spacing:0.000px;font-family:'Liberation Sans', sans-serif;transform:scaleX(1.1985);transform-origin:0 0;">+/- 7D</span><span class="t" id="b30d" style="left:1562.87px;top:413.13px;font-size:10.00px;font-weight:700;color:#111;letter-spacing:0.000px;font-family:'Liberation Sans', sans-serif;transform:scaleX(1.1840);transform-origin:0 0;">+/- 30D</span><span class="t" id="oth" style="left:1067.48px;top:761.83px;font-size:16.86px;font-weight:400;color:#101a33;letter-spacing:0.109px;font-family:'Liberation Sans', sans-serif;transform:scaleX(1.0800);transform-origin:0 0;-webkit-text-stroke:0.35px #101a33;">Other events in the last year</span><span class="t" id="thd" style="left:1057.14px;top:808.94px;font-size:12.71px;font-weight:400;color:#1a1a1a;letter-spacing:0.000px;font-family:'Liberation Sans', sans-serif;transform:scaleX(0.9735);transform-origin:0 0;-webkit-text-stroke:0.28px #1a1a1a;">EVENT DATE</span><span class="t" id="thm" style="left:1338.18px;top:808.94px;font-size:12.71px;font-weight:400;color:#1a1a1a;letter-spacing:0.000px;font-family:'Liberation Sans', sans-serif;transform:scaleX(0.9041);transform-origin:0 0;-webkit-text-stroke:0.28px #1a1a1a;">METRIC</span><span class="t" id="r0a" style="left:1056.78px;top:866.21px;font-size:13.57px;font-weight:400;color:#2b2b2b;letter-spacing:0.000px;font-family:'Liberation Sans', sans-serif;transform:scaleX(1.0097);transform-origin:0 0;">10/21/2022 - 11/01/2022</span><span class="t" id="r0m" style="left:1338.06px;top:866.21px;font-size:13.57px;font-weight:400;color:#2b2b2b;letter-spacing:0.000px;font-family:'Liberation Sans', sans-serif;transform:scaleX(1.0477);transform-origin:0 0;">284K users</span><span class="t" id="r1a" style="left:1056.74px;top:917.91px;font-size:13.57px;font-weight:400;color:#2b2b2b;letter-spacing:0.328px;font-family:'Liberation Sans', sans-serif;transform:scaleX(1.0800);transform-origin:0 0;">03/03/2022 - 03/09/2022</span><span class="t" id="r1m" style="left:1338.06px;top:917.91px;font-size:13.57px;font-weight:400;color:#2b2b2b;letter-spacing:0.000px;font-family:'Liberation Sans', sans-serif;transform:scaleX(1.0492);transform-origin:0 0;">35K users</span><span class="t" id="r2a" style="left:1056.74px;top:969.61px;font-size:13.57px;font-weight:400;color:#2b2b2b;letter-spacing:0.037px;font-family:'Liberation Sans', sans-serif;transform:scaleX(1.0800);transform-origin:0 0;">01/29/2023 - 02/01/2023</span><span class="t" id="r2m" style="left:1338.06px;top:969.61px;font-size:13.57px;font-weight:400;color:#2b2b2b;letter-spacing:0.000px;font-family:'Liberation Sans', sans-serif;transform:scaleX(1.0492);transform-origin:0 0;">24K users</span><span class="t" id="r3a" style="left:1056.74px;top:1021.31px;font-size:13.57px;font-weight:400;color:#2b2b2b;letter-spacing:0.054px;font-family:'Liberation Sans', sans-serif;transform:scaleX(1.0800);transform-origin:0 0;">01/02/2023 - 01/05/2023</span><span class="t" id="r3m" style="left:1338.06px;top:1021.31px;font-size:13.57px;font-weight:400;color:#2b2b2b;letter-spacing:0.000px;font-family:'Liberation Sans', sans-serif;transform:scaleX(1.0492);transform-origin:0 0;">24K users</span><span class="t" id="r4a" style="left:1056.78px;top:1073.01px;font-size:13.57px;font-weight:400;color:#2b2b2b;letter-spacing:0.000px;font-family:'Liberation Sans', sans-serif;transform:scaleX(1.0205);transform-origin:0 0;">12/12/2022 - 12/14/2022</span><span class="t" id="r4m" style="left:1338.07px;top:1073.01px;font-size:13.57px;font-weight:400;color:#2b2b2b;letter-spacing:0.000px;font-family:'Liberation Sans', sans-serif;transform:scaleX(1.0375);transform-origin:0 0;">22K users</span><span class="t" id="pg1" style="left:1274.35px;top:1124.55px;font-size:16.71px;font-weight:400;color:#101a33;letter-spacing:0.000px;font-family:'Liberation Sans', sans-serif;-webkit-text-stroke:0.60px #101a33;">1</span><span class="t" id="pg2" style="left:1304.05px;top:1124.55px;font-size:16.71px;font-weight:400;color:#aaaaaa;letter-spacing:0.000px;font-family:'Liberation Sans', sans-serif;">2</span><span class="t" id="pg101" style="left:1373.25px;top:1124.55px;font-size:16.71px;font-weight:400;color:#aaaaaa;letter-spacing:0.000px;font-family:'Liberation Sans', sans-serif;transform:scaleX(0.7365);transform-origin:0 0;">101</span><span class="t" id="ya0" style="left:1073.77px;top:697.80px;font-size:9.22px;font-weight:400;color:#555;letter-spacing:0.000px;font-family:'Liberation Sans', sans-serif;-webkit-text-stroke:0.20px #555;">0</span><span class="t" id="ya5" style="left:1073.77px;top:667.80px;font-size:9.22px;font-weight:400;color:#555;letter-spacing:0.000px;font-family:'Liberation Sans', sans-serif;-webkit-text-stroke:0.20px #555;">5</span><span class="t" id="ya10" style="left:1068.65px;top:637.80px;font-size:9.22px;font-weight:400;color:#555;letter-spacing:0.000px;font-family:'Liberation Sans', sans-serif;-webkit-text-stroke:0.20px #555;">10</span><span class="t" id="ya15" style="left:1068.65px;top:607.80px;font-size:9.22px;font-weight:400;color:#555;letter-spacing:0.000px;font-family:'Liberation Sans', sans-serif;-webkit-text-stroke:0.20px #555;">15</span><span class="t" id="ya20" style="left:1068.65px;top:577.80px;font-size:9.22px;font-weight:400;color:#555;letter-spacing:0.000px;font-family:'Liberation Sans', sans-serif;-webkit-text-stroke:0.20px #555;">20</span><span class="t" id="ya25" style="left:1068.65px;top:547.80px;font-size:9.22px;font-weight:400;color:#555;letter-spacing:0.000px;font-family:'Liberation Sans', sans-serif;-webkit-text-stroke:0.20px #555;">25</span><span class="t" id="ya30" style="left:1068.65px;top:517.80px;font-size:9.22px;font-weight:400;color:#555;letter-spacing:0.000px;font-family:'Liberation Sans', sans-serif;-webkit-text-stroke:0.20px #555;">30</span><span class="t" id="ya35" style="left:1068.65px;top:487.80px;font-size:9.22px;font-weight:400;color:#555;letter-spacing:0.000px;font-family:'Liberation Sans', sans-serif;-webkit-text-stroke:0.20px #555;">35</span><span class="t" id="ya40" style="left:1068.65px;top:457.80px;font-size:9.22px;font-weight:400;color:#555;letter-spacing:0.000px;font-family:'Liberation Sans', sans-serif;-webkit-text-stroke:0.20px #555;">40</span><span class="t" id="xa0" style="left:1104.99px;top:711.89px;font-size:10.29px;font-weight:400;color:#555;letter-spacing:0.000px;font-family:'Liberation Sans', sans-serif;-webkit-text-stroke:0.23px #555;">24th</span><span class="t" id="xa1" style="left:1208.29px;top:711.89px;font-size:10.29px;font-weight:400;color:#555;letter-spacing:0.000px;font-family:'Liberation Sans', sans-serif;-webkit-text-stroke:0.23px #555;">26th</span><span class="t" id="xa2" style="left:1311.59px;top:711.89px;font-size:10.29px;font-weight:400;color:#555;letter-spacing:0.000px;font-family:'Liberation Sans', sans-serif;-webkit-text-stroke:0.23px #555;">28th</span><span class="t" id="xa3" style="left:1414.89px;top:711.89px;font-size:10.29px;font-weight:400;color:#555;letter-spacing:0.000px;font-family:'Liberation Sans', sans-serif;-webkit-text-stroke:0.23px #555;">30th</span><span class="t" id="xa4" style="left:1519.62px;top:711.89px;font-size:10.29px;font-weight:400;color:#555;letter-spacing:0.000px;font-family:'Liberation Sans', sans-serif;-webkit-text-stroke:0.23px #555;">2nd</span></body></html>
